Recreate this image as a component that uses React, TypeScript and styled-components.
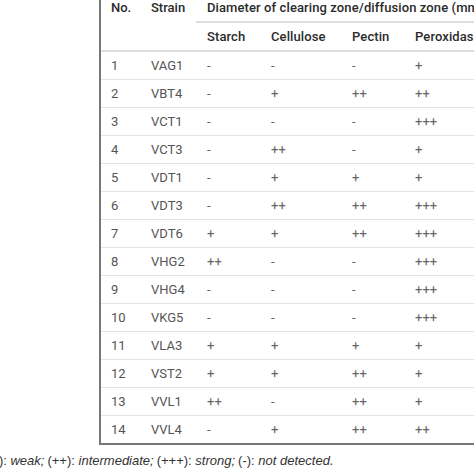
import styled, { createGlobalStyle } from 'styled-components';

const rows = [
  ['1', 'VAG1', '-', '-', '-', '+'],
  ['2', 'VBT4', '-', '+', '++', '++'],
  ['3', 'VCT1', '-', '-', '-', '+++'],
  ['4', 'VCT3', '-', '++', '-', '+'],
  ['5', 'VDT1', '-', '+', '+', '+'],
  ['6', 'VDT3', '-', '++', '++', '+++'],
  ['7', 'VDT6', '+', '+', '++', '+++'],
  ['8', 'VHG2', '++', '-', '-', '+++'],
  ['9', 'VHG4', '-', '-', '-', '+++'],
  ['10', 'VKG5', '-', '-', '-', '+++'],
  ['11', 'VLA3', '+', '+', '+', '+'],
  ['12', 'VST2', '+', '+', '++', '+'],
  ['13', 'VVL1', '++', '-', '++', '+'],
  ['14', 'VVL4', '-', '+', '++', '++'],
];

const colWidths = [39, 56, 64, 81, 63, 100];

export default function App() {
  return (
    <Page>
      <GlobalStyle />
      <Frame>
        <Table>
          <colgroup>
            {colWidths.map((w, i) => (
              <col key={i} style={{ width: w }} />
            ))}
          </colgroup>
          <thead>
            <tr>
              <HeadCell rowSpan={2} $first>No.</HeadCell>
              <HeadCell rowSpan={2}>Strain</HeadCell>
              <GroupCell colSpan={4}>Diameter of clearing zone/diffusion zone (mm)</GroupCell>
            </tr>
            <tr>
              <SubCell>Starch</SubCell>
              <SubCell>Cellulose</SubCell>
              <SubCell>Pectin</SubCell>
              <SubCell>Peroxidase</SubCell>
            </tr>
          </thead>
          <tbody>
            {rows.map((r) => (
              <Row key={r[0]}>
                {r.map((v, i) => (
                  <Cell key={i} $first={i === 0} $mark={i > 1}>
                    {v}
                  </Cell>
                ))}
              </Row>
            ))}
          </tbody>
        </Table>
      </Frame>
      <Note>
        (+): <em>weak;</em>(++): <em>intermediate;</em>(+++): <em>strong;</em>(-):{' '}
        <em>not detected.</em>
      </Note>
    </Page>
  );
}

/* Styled Components */

const GlobalStyle = createGlobalStyle`
  html, body {
    margin: 0;
    padding: 0;
    background: #fff;
    overflow: hidden;
  }
`;

const Page = styled.div`
  width: 474px;
  height: 474px;
  overflow: hidden;
  font-family: Roboto, "Noto Sans", sans-serif;
`;

const Frame = styled.div`
  margin: -6px 0 0 99px;
  width: 405px;
  border-left: 2px solid #777;
  border-bottom: 2px solid #777;
`;

const Table = styled.table`
  table-layout: fixed;
  width: 403px;
  border-collapse: separate;
  border-spacing: 0;
  font-size: 13px;
`;

const HeadCell = styled.th<{ $first?: boolean }>`
  text-align: left;
  vertical-align: top;
  font-weight: 500;
  color: #2b2b2b;
  padding: 0 0 0 ${(p) => (p.$first ? 10 : 11)}px;
  line-height: 27px;
  border-bottom: 2px solid #dedede;
  white-space: nowrap;
`;

const GroupCell = styled.th`
  text-align: left;
  font-weight: 500;
  color: #2b2b2b;
  padding: 0 0 0 11px;
  height: 27px;
  line-height: 27px;
  border-bottom: 2px solid #dedede;
  white-space: nowrap;
  overflow: visible;
  letter-spacing: 0.1px;
`;

const SubCell = styled(GroupCell)``;

const Row = styled.tr`
  &:last-child td {
    border-bottom: none;
    height: 25px;
  }
`;

const Cell = styled.td<{ $first?: boolean; $mark?: boolean }>`
  padding: 0 0 0 ${(p) => (p.$first ? 10 : 11)}px;
  height: 27px;
  line-height: 27px;
  color: ${(p) => (p.$mark ? '#666' : '#555')};
  border-bottom: 1px solid #e4e4e4;
  white-space: nowrap;
`;

const Note = styled.p`
  margin: 8px 0 0 -13px;
  font-family: "Liberation Sans", Arial, sans-serif;
  font-size: 13px;
  line-height: 15px;
  color: #333;
  white-space: nowrap;

  em {
    font-style: italic;
    margin-right: 3px;
  }
`;
